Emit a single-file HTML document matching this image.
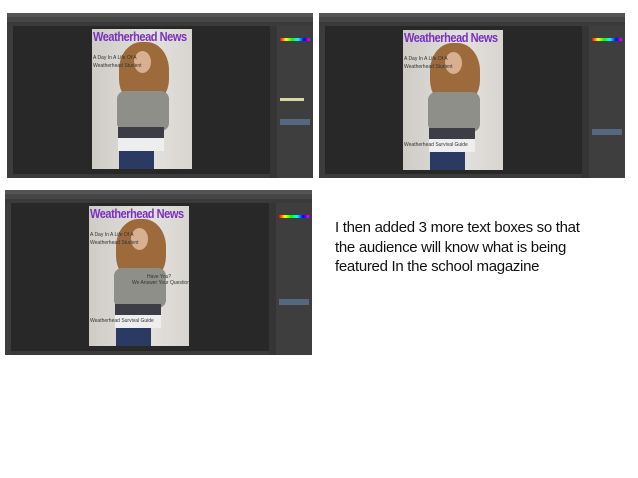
<!DOCTYPE html>
<html><head><style>
body{margin:0;width:638px;height:478px;background:#fff;position:relative;overflow:hidden;font-family:"Liberation Sans",sans-serif}
.ps{position:absolute;background:#282828;overflow:hidden}
.ps .menu{position:absolute;left:0;right:0;top:0;height:4px;background:#545454}
.ps .opt{position:absolute;left:0;right:0;top:4px;height:5px;background:#464646}
.ps .tab{position:absolute;left:0;right:0;top:9px;height:4px;background:#3a3a3a}
.ps .tools{position:absolute;left:0;top:13px;bottom:0;width:6px;background:#3c3c3c}
.ps .panel{position:absolute;right:0;top:13px;bottom:0;width:36px;background:#3e3e3e}
.ps .strip{position:absolute;right:36px;top:13px;bottom:0;width:7px;background:#353535}
.ps .status{position:absolute;left:6px;right:43px;bottom:0;height:4px;background:#3a3a3a}
.doc{position:absolute;width:100px;height:140px;background:linear-gradient(90deg,#cfccc6,#e3e1dd 60%,#d8d5d0);overflow:hidden}
.doc div{position:absolute}
.t{left:1px;top:1px;font-size:12.5px;font-weight:bold;color:#7a30c0;white-space:nowrap;letter-spacing:-0.5px;transform:scaleX(0.88);transform-origin:0 0}
.s{font-size:5px;color:#333;white-space:nowrap}
.txt{position:absolute;left:335px;top:218px;font-size:15px;line-height:19.5px;color:#111;letter-spacing:-0.3px}
</style></head><body>

<div class="ps" style="left:7px;top:13px;width:306px;height:165px">
<div class="menu"></div><div class="opt"></div><div class="tab"></div><div class="tools"></div><div class="strip"></div><div class="panel">
<div style="position:absolute;left:3px;top:12px;width:30px;height:3px;background:linear-gradient(90deg,red,yellow,lime,cyan,blue,magenta)"></div>
<div style="position:absolute;left:3px;top:72px;width:24px;height:3px;background:#d8d8a0"></div>
<div style="position:absolute;left:3px;top:93px;width:30px;height:6px;background:#55687f"></div>
</div><div class="status"></div>
<div class="doc" style="left:85px;top:16px">
<div style="left:27px;top:13px;width:50px;height:62px;border-radius:45% 45% 40% 40%;background:#9d6a3c"></div>
<div style="left:42px;top:22px;width:17px;height:22px;border-radius:50%;background:#d9b08f"></div>
<div style="left:25px;top:62px;width:52px;height:40px;border-radius:8px;background:#8d8f88"></div>
<div style="left:26px;top:98px;width:46px;height:11px;background:#3d3e45"></div>
<div style="left:26px;top:109px;width:46px;height:13px;background:#eeeeee"></div>
<div style="left:27px;top:122px;width:35px;height:18px;background:#2a3a63"></div>
<div class="t">Weatherhead News</div>
<div class="s" style="left:1px;top:26px">A Day In A Life Of A</div>
<div class="s" style="left:1px;top:34px">Weatherhead Student</div>
</div></div>

<div class="ps" style="left:319px;top:13px;width:306px;height:165px">
<div class="menu"></div><div class="opt"></div><div class="tab"></div><div class="tools"></div><div class="strip"></div><div class="panel">
<div style="position:absolute;left:3px;top:12px;width:30px;height:3px;background:linear-gradient(90deg,red,yellow,lime,cyan,blue,magenta)"></div>
<div style="position:absolute;left:3px;top:103px;width:30px;height:6px;background:#55687f"></div>
</div><div class="status"></div>
<div class="doc" style="left:84px;top:17px">
<div style="left:27px;top:13px;width:50px;height:62px;border-radius:45% 45% 40% 40%;background:#9d6a3c"></div>
<div style="left:42px;top:22px;width:17px;height:22px;border-radius:50%;background:#d9b08f"></div>
<div style="left:25px;top:62px;width:52px;height:40px;border-radius:8px;background:#8d8f88"></div>
<div style="left:26px;top:98px;width:46px;height:11px;background:#3d3e45"></div>
<div style="left:26px;top:109px;width:46px;height:13px;background:#eeeeee"></div>
<div style="left:27px;top:122px;width:35px;height:18px;background:#2a3a63"></div>
<div class="t">Weatherhead News</div>
<div class="s" style="left:1px;top:26px">A Day In A Life Of A</div>
<div class="s" style="left:1px;top:34px">Weatherhead Student</div>
<div class="s" style="left:1px;top:112px">Weatherhead Survival Guide</div>
</div></div>

<div class="ps" style="left:5px;top:190px;width:307px;height:165px">
<div class="menu"></div><div class="opt"></div><div class="tab"></div><div class="tools"></div><div class="strip"></div><div class="panel">
<div style="position:absolute;left:3px;top:12px;width:30px;height:3px;background:linear-gradient(90deg,red,yellow,lime,cyan,blue,magenta)"></div>
<div style="position:absolute;left:3px;top:96px;width:30px;height:6px;background:#55687f"></div>
</div><div class="status"></div>
<div class="doc" style="left:84px;top:16px">
<div style="left:27px;top:13px;width:50px;height:62px;border-radius:45% 45% 40% 40%;background:#9d6a3c"></div>
<div style="left:42px;top:22px;width:17px;height:22px;border-radius:50%;background:#d9b08f"></div>
<div style="left:25px;top:62px;width:52px;height:40px;border-radius:8px;background:#8d8f88"></div>
<div style="left:26px;top:98px;width:46px;height:11px;background:#3d3e45"></div>
<div style="left:26px;top:109px;width:46px;height:13px;background:#eeeeee"></div>
<div style="left:27px;top:122px;width:35px;height:18px;background:#2a3a63"></div>
<div class="t">Weatherhead News</div>
<div class="s" style="left:1px;top:26px">A Day In A Life Of A</div>
<div class="s" style="left:1px;top:34px">Weatherhead Student</div>
<div class="s" style="left:58px;top:68px">Have You?</div>
<div class="s" style="left:43px;top:74px">We Answer Your Questions</div>
<div class="s" style="left:1px;top:112px">Weatherhead Survival Guide</div>
</div></div>

<div class="txt">I then added 3 more text boxes so that<br>the audience will know what is being<br>featured In the school magazine</div>
</body></html>
